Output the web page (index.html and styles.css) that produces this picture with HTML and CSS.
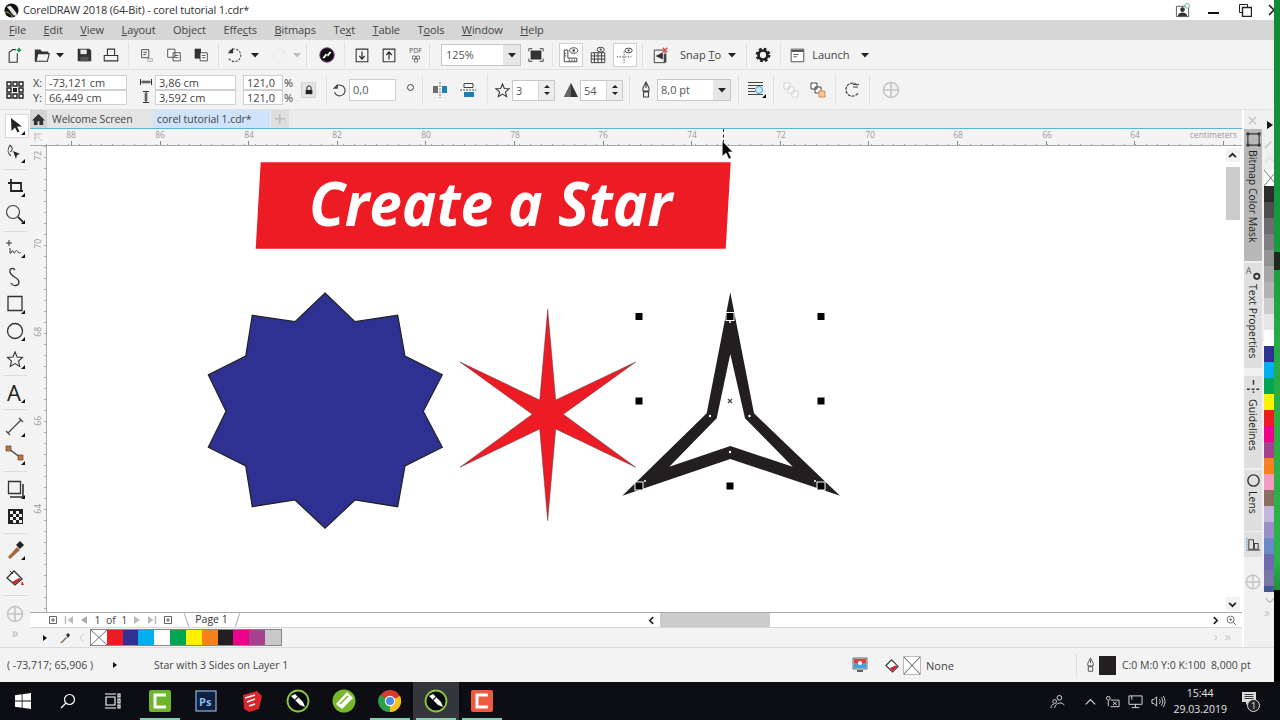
FILE: index.html
```html
<!DOCTYPE html>
<html>
<head>
    <meta charset="UTF-8">
    <title>CorelDRAW 2018 (64-Bit) - corel tutorial 1.cdr*</title>
    <link rel="stylesheet" href="styles.css">
</head>
<body>
    <!-- Shared icons -->
    <svg class="sprite" width="0" height="0">
        <symbol id="caret" viewBox="0 0 8 8"><path d="M0 2h8L4 6.500z" fill="#222"/></symbol>
        <symbol id="corner" viewBox="0 0 28 28"><path d="M24 24h-4l4-4z" fill="#111"/></symbol>
        <symbol id="penlogo" viewBox="0 0 24 24">
            <circle cx="12" cy="12" r="10.500" fill="#08090c" stroke="#8cc63f" stroke-width="1.800"/>
            <path d="M5 7l4-2 8 8 2 5-5-2z" fill="#fff"/><path d="M9 11l3-3" stroke="#222" stroke-width="1.200"/>
        </symbol>
        <symbol id="plusround" viewBox="0 0 20 20">
            <circle cx="10" cy="10" r="7.500" fill="none" stroke="#c4c4c4" stroke-width="1.600"/>
            <path d="M10 3v14M3 10h14" stroke="#c4c4c4" stroke-width="1.600"/>
        </symbol>
    </svg>

    <div class="desk">
        <div class="window">
            <!-- Title bar -->
            <div class="titlebar">
                <svg class="applogo" viewBox="0 0 16 16">
                    <circle cx="8" cy="8" r="7.500" fill="#111"/>
                    <path d="M3 4l4-1 6 7 1 4-4-1z" fill="#e8e8e8"/>
                    <path d="M1 10c3-1 6 1 8 5" stroke="#9bbf3a" fill="none"/>
                </svg>
                <span class="title">CorelDRAW 2018 (64-Bit) - corel tutorial 1.cdr*</span>
                <div class="winbtns">
                    <svg class="wb-user" viewBox="0 0 16 16">
                        <path d="M1.500 3.500h13v11h-13z" fill="#fff" stroke="#555"/>
                        <circle cx="8" cy="7" r="2.500" fill="#333"/><path d="M3 14c0-5 10-5 10 0z" fill="#333"/>
                        <circle cx="13" cy="3" r="2.500" fill="#fff" stroke="#5bb98c"/>
                    </svg>
                    <span class="wb-min"></span>
                    <svg class="wb-max" viewBox="0 0 13 13">
                        <path d="M0.500 0.500h8v8h-8z" fill="none" stroke="#222"/>
                        <path d="M3.500 3.500h9v9h-9z" fill="#fff" stroke="#222" stroke-width="1.400"/>
                    </svg>
                    <svg class="wb-close" viewBox="0 0 12 12"><path d="M1 1l10 10M11 1L1 11" stroke="#111" stroke-width="1.500"/></svg>
                </div>
            </div>

            <!-- Menu -->
            <div class="menubar">
                <span><u>F</u>ile</span>
                <span><u>E</u>dit</span>
                <span><u>V</u>iew</span>
                <span><u>L</u>ayout</span>
                <span>Ob<u>j</u>ect</span>
                <span>Effe<u>c</u>ts</span>
                <span><u>B</u>itmaps</span>
                <span>Te<u>x</u>t</span>
                <span><u>T</u>able</span>
                <span>T<u>o</u>ols</span>
                <span><u>W</u>indow</span>
                <span><u>H</u>elp</span>
            </div>

            <!-- Standard toolbar -->
            <div class="toolbar">
                <div class="tb"><svg viewBox="0 0 20 20"><path d="M3.500 18V7l4-3h5v14z" fill="none" stroke="#333" stroke-width="1.200"/><path d="M11 1h7v7h-7z" fill="#fff"/><path d="M14.500 2v5M12 4.500h5" stroke="#1a9e4b" stroke-width="2"/></svg></div>
                <div class="tb"><svg viewBox="0 0 20 20"><path d="M2 4h6l2 2h7v2H6l-2 9H2z" fill="#333"/><path d="M4.500 8.500H18l-2 8.500H3z" fill="none" stroke="#333" stroke-width="1.200"/></svg></div>
                <svg class="caret c-w8"><use href="#caret"/></svg>
                <div class="tb gap6"><svg viewBox="0 0 20 20"><path d="M3 3h13l2 2v12H3z" fill="#333"/><path d="M6 4h7v5H6z" fill="#e8e8e8"/><path d="M6 12h9v5H6z" fill="#555"/></svg></div>
                <div class="tb"><svg viewBox="0 0 20 20"><path d="M6 3.500h8v7H6zM2.500 10.500h15v6h-15z" fill="none" stroke="#333" stroke-width="1.200"/></svg></div>
                <i class="sep s-left"></i>
                <div class="tb"><svg viewBox="0 0 20 20"><path d="M4 4h8v9H4zM6 7h4M6 9.500h3" fill="none" stroke="#444"/><path d="M11 14h5v3h-5z" fill="none" stroke="#777" stroke-dasharray="1.500 1"/></svg></div>
                <div class="tb"><svg viewBox="0 0 20 20"><path d="M3 3.500h8v9H3zM9 7.500h8v9H9zM11 10.500h4M11 13h4" fill="#fff" stroke="#444"/></svg></div>
                <div class="tb"><svg viewBox="0 0 20 20"><path d="M3 3h7v11H3z" fill="#333"/><path d="M9 7.500h8v9H9zM11 10.500h4M11 13h4" fill="#fff" stroke="#444"/></svg></div>
                <i class="sep s-undo"></i>
                <div class="tb"><svg viewBox="0 0 20 20"><path d="M5 6a7 7 0 1 1-1 7" fill="none" stroke="#444" stroke-width="1.200" stroke-dasharray="2.500 1.500"/><path d="M9 2v6H3z" fill="#333"/></svg></div>
                <svg class="caret c-w12"><use href="#caret"/></svg>
                <div class="tb gap5 off"><svg viewBox="0 0 20 20"><path d="M15 6a7 7 0 1 0 1 7" fill="none" stroke="#d4d4d4" stroke-width="1.200" stroke-dasharray="2.500 1.500"/><path d="M12 2v6h6z" fill="#d4d4d4"/></svg></div>
                <svg class="caret c-w8 off"><use href="#caret"/></svg>
                <i class="sep s-left2"></i>
                <div class="tb"><svg viewBox="0 0 20 20"><circle cx="10" cy="10" r="8" fill="#111"/><circle cx="10" cy="10" r="8" fill="none" stroke="#7a2a8c" stroke-width="1"/><path d="M5 13l4-5 1 2-3 4zM15 7l-4 5-1-2 3-4z" fill="#fff"/></svg></div>
                <i class="sep s-exp"></i>
                <div class="tb"><svg viewBox="0 0 20 20"><path d="M3.500 3.500h13v14h-13z" fill="none" stroke="#333" stroke-width="1.200"/><path d="M10 6v8M7 11l3 3.500 3-3.500" fill="none" stroke="#222" stroke-width="1.300"/></svg></div>
                <div class="tb"><svg viewBox="0 0 20 20"><path d="M3.500 3.500h13v14h-13z" fill="none" stroke="#333" stroke-width="1.200"/><path d="M10 15V7M7 10l3-3.500 3 3.500" fill="none" stroke="#222" stroke-width="1.300"/></svg></div>
                <div class="tb pdf"><span>PDF</span><svg viewBox="0 0 10 8"><path d="M1.500 1h3v3h-3zM5.500 1h3v3h-3zM3.500 4h3v3h-3z" fill="none" stroke="#666" stroke-width=".8"/></svg></div>
                <i class="sep s-pdf"></i>
                <div class="combo zoomcombo"><span class="combo-v">125%</span><span class="combo-btn"><svg class="caret"><use href="#caret"/></svg></span></div>
                <div class="tb gap3"><svg viewBox="0 0 20 20"><path d="M4 5h12v10H4z" fill="#333"/><path d="M2 6V3h4M14 3h4v3M18 14v3h-4M6 17H2v-3" fill="none" stroke="#333"/></svg></div>
                <i class="sep s-view"></i>
                <div class="tb boxed"><svg viewBox="0 0 20 20"><path d="M2.500 4.500v13h14v-4h-10v-9z" fill="none" stroke="#333"/><path d="M2.500 8h2M2.500 11h2M8 17v-2M11 17v-2M14 17v-2" stroke="#333"/><ellipse cx="13" cy="5" rx="4.500" ry="3" fill="none" stroke="#333"/><circle cx="13" cy="5" r="1.300" fill="#333"/></svg></div>
                <div class="tb plain"><svg viewBox="0 0 20 20"><path d="M2.500 7.500h15v11h-15zM2.500 11h15M2.500 14.500h15M6 7.500v11M10 7.500v11M14 7.500v11" fill="none" stroke="#333"/><ellipse cx="13" cy="4" rx="4" ry="2.600" fill="none" stroke="#333"/><circle cx="13" cy="4" r="1.100" fill="#333"/></svg></div>
                <div class="tb boxed"><svg viewBox="0 0 20 20"><path d="M9 6v13M1 12h16" stroke="#444" stroke-dasharray="1.500 1.500"/><ellipse cx="14" cy="5" rx="4" ry="2.600" fill="none" stroke="#333"/><circle cx="14" cy="5" r="1.100" fill="#333"/></svg></div>
                <i class="sep s-snap"></i>
                <div class="tb"><svg viewBox="0 0 20 20"><path d="M2.500 4.500h12v14h-12z" fill="none" stroke="#333"/><path d="M12 7l-8 4 8 4z" fill="#333"/><path d="M12 2l5 5M17 2l-5 5" stroke="#e2453c" stroke-width="1.400"/><path d="M13 9h3v9h-3z" fill="#444"/></svg></div>
                <span class="label snap">Snap <u>T</u>o</span>
                <svg class="caret c-snap"><use href="#caret"/></svg>
                <i class="sep s-gear"></i>
                <div class="tb"><svg viewBox="0 0 20 20"><circle cx="10" cy="10" r="5" fill="none" stroke="#222" stroke-width="3"/><circle cx="10" cy="10" r="7" fill="none" stroke="#222" stroke-width="2.400" stroke-dasharray="3 2.500"/></svg></div>
                <i class="sep s-lau"></i>
                <div class="tb"><svg viewBox="0 0 20 20"><path d="M3.500 3.500h14v14h-14z" fill="#fff" stroke="#444"/><path d="M4 5.500h13" stroke="#444" stroke-width="2"/><path d="M6 9.500h6M6 12h4" stroke="#555"/></svg></div>
                <span class="label launch">Launch</span>
                <svg class="caret c-launch"><use href="#caret"/></svg>
            </div>

            <!-- Property bar -->
            <div class="propbar">
                <svg class="origin" viewBox="0 0 18 18">
                    <path d="M1 1h4v4H1zM7 1h4v4H7zM13 1h4v4h-4zM1 7h4v4H1zM13 7h4v4h-4zM1 13h4v4H1zM7 13h4v4H7zM13 13h4v4h-4z" fill="none" stroke="#222" stroke-width="1.400"/>
                    <path d="M7 7h4v4H7z" fill="#222"/>
                </svg>
                <div class="xy-labels"><span>X:</span><span>Y:</span></div>
                <div class="pair f-pos"><span>-73,121 cm</span><span>66,449 cm</span></div>
                <div class="size-icons">
                    <svg viewBox="0 0 12 8"><path d="M0.500 1v6M11.500 1v6M1 4h10M3 2.500v3M5 2.500v3M7 2.500v3M9 2.500v3" stroke="#333"/></svg>
                    <svg viewBox="0 0 8 12"><path d="M1 0.500h6M1 11.500h6M4 1v10M2.500 3h3M2.500 5h3M2.500 7h3M2.500 9h3" stroke="#333"/></svg>
                </div>
                <div class="pair f-size"><span>3,86 cm</span><span>3,592 cm</span></div>
                <div class="pair f-scale"><span>121,0</span><span>121,0</span></div>
                <div class="pcts"><span>%</span><span>%</span></div>
                <div class="lockbox"><svg viewBox="0 0 12 12"><path d="M3.500 6V3.500a2.500 2.500 0 0 1 5 0V6" fill="none" stroke="#222" stroke-width="1.200"/><path d="M2 6h8v5H2z" fill="#222"/></svg></div>
                <i class="sep s-rot"></i>
                <svg class="rot" viewBox="0 0 18 18"><path d="M4 5a6.500 6.500 0 1 1-1 6" fill="none" stroke="#444" stroke-width="1.300"/><path d="M7 1v6H1z" fill="#444"/></svg>
                <div class="field f-angle">0,0</div>
                <span class="degree"></span>
                <i class="sep s-mir"></i>
                <svg class="pi mir1" viewBox="0 0 18 18"><path d="M9 1v16" stroke="#777" stroke-dasharray="2 1"/><path d="M2 5h5v7H2z" fill="#6d6d6d"/><path d="M11 5h5v7h-5z" fill="#1d7fb8"/></svg>
                <svg class="pi mir2" viewBox="0 0 18 18"><path d="M1 9h16" stroke="#555" stroke-dasharray="2 1"/><path d="M5 2.500h9v4H5z" fill="none" stroke="#444"/><path d="M5 11h10v5H5z" fill="#1d7fb8"/></svg>
                <i class="sep s-star"></i>
                <svg class="pi star" viewBox="0 0 16 16"><path d="M8 1l2 4.800 5 .4-3.800 3.300 1.200 5L8 11.800l-4.400 2.700 1.200-5L1 6.200l5-.4z" fill="none" stroke="#333" stroke-width="1.100"/></svg>
                <div class="spin sp-a"><span class="spin-v">3</span><span class="spin-b"><b class="up"></b><b class="dn"></b></span></div>
                <svg class="pi tri" viewBox="0 0 16 16"><path d="M8 1l7 14H1z" fill="#333"/><path d="M8 1L1 15h7z" fill="#666"/></svg>
                <div class="spin sp-b"><span class="spin-v">54</span><span class="spin-b"><b class="up"></b><b class="dn"></b></span></div>
                <i class="sep s-pen"></i>
                <svg class="pi pen" viewBox="0 0 12 18"><path d="M6 1l3 6v3H3V7zM3.500 11h5v5h-5zM6 3v4" fill="none" stroke="#444" stroke-width="1.100"/></svg>
                <div class="combo pencombo"><span class="combo-v">8,0 pt</span><span class="combo-btn"><svg class="caret"><use href="#caret"/></svg></span></div>
                <i class="sep s-wrap"></i>
                <svg class="pi wrap" viewBox="0 0 20 20"><path d="M1 2.500h15M1 5.500h15M1 8.500h7M1 11.500h7M1 14.500h15" stroke="#444"/><circle cx="12" cy="10" r="3.500" fill="#cfe7f5" stroke="#3b9ad0"/><path d="M15 18h4v-4z" fill="#111"/></svg>
                <i class="sep s-ob"></i>
                <svg class="pi ob1" viewBox="0 0 18 18"><path d="M2 2h6v6H2zM6 6h6v6H6zM10 10h6v6h-6z" fill="#fff" stroke="#cfcfcf"/></svg>
                <svg class="pi ob2" viewBox="0 0 18 18"><path d="M2 2h6v6H2zM6 6h6v6H6z" fill="#fff" stroke="#444"/><path d="M10 10h6v6h-6z" fill="#f4c49a" stroke="#d98a4a"/></svg>
                <i class="sep s-conv"></i>
                <svg class="pi conv" viewBox="0 0 18 18"><path d="M14 4a6.500 6.500 0 1 0 1 8" fill="none" stroke="#444" stroke-width="1.300" stroke-dasharray="3 1"/><path d="M10 3.500h6M10 6h5" stroke="#444"/></svg>
                <i class="sep s-add"></i>
                <svg class="pi add"><use href="#plusround"/></svg>
            </div>

            <!-- Main area -->
            <div class="main">
                <div class="toolbox">
                    <div class="tool active"><svg viewBox="0 0 28 28"><path d="M10 7l.5 13 3.500-3.500 2.500 5 2-1-2.500-5h5z" fill="#222"/><use href="#corner"/></svg></div>
                    <div class="tool"><svg viewBox="0 0 28 28"><path d="M9 6c-3 5-3 8 1 11M9 6c3 3 3 6 0 7" fill="none" stroke="#444" stroke-width="1.100"/><path d="M12 12l7 3-3 1-1 4z" fill="#222"/><use href="#corner"/></svg></div>
                    <i class="tsep"></i>
                    <div class="tool"><svg viewBox="0 0 28 28"><path d="M7 10h13v8M10 6v12h12" fill="none" stroke="#222" stroke-width="1.800"/><use href="#corner"/></svg></div>
                    <div class="tool"><svg viewBox="0 0 28 28"><circle cx="12" cy="12" r="6.500" fill="none" stroke="#444" stroke-width="1.200"/><path d="M17 17l5 5" stroke="#333" stroke-width="1.800"/><use href="#corner"/></svg></div>
                    <i class="tsep"></i>
                    <div class="tool"><svg viewBox="0 0 28 28"><path d="M8 6v6M5 9h6" stroke="#333"/><path d="M9 14v5c1 2 2-4 3-2s1 3 2 1 2-2 3 0 2 1 3 0" fill="none" stroke="#333"/><use href="#corner"/></svg></div>
                    <div class="tool"><svg viewBox="0 0 28 28"><path d="M14 8c-3-4-7 0-4 4s8 4 8 8-6 5-8 1" fill="none" stroke="#333" stroke-width="1.300"/></svg></div>
                    <div class="tool"><svg viewBox="0 0 28 28"><path d="M7 6.500h14v14H7z" fill="none" stroke="#333" stroke-width="1.300"/><use href="#corner"/></svg></div>
                    <div class="tool"><svg viewBox="0 0 28 28"><circle cx="14" cy="14" r="7.500" fill="none" stroke="#333" stroke-width="1.300"/><use href="#corner"/></svg></div>
                    <div class="tool"><svg viewBox="0 0 28 28"><path d="M14 7l2.100 5 5.400.5-4 3.600 1.200 5.300L14 18.600l-4.700 2.800 1.200-5.300-4-3.600 5.400-.5z" fill="none" stroke="#333" stroke-width="1.100"/><use href="#corner"/></svg></div>
                    <i class="tsep"></i>
                    <div class="tool"><span class="tool-a">A</span><svg viewBox="0 0 28 28"><use href="#corner"/></svg></div>
                    <i class="tsep"></i>
                    <div class="tool"><svg viewBox="0 0 28 28"><path d="M7 20L20 7M5 18l4 4M18 5l4 4" stroke="#444" stroke-width="1.200"/><use href="#corner"/></svg></div>
                    <div class="tool"><svg viewBox="0 0 28 28"><path d="M8 8l12 9" stroke="#333" stroke-width="1.200"/><path d="M5 5h5v5H5z" fill="#c8753a" stroke="#333" stroke-width=".6"/><path d="M17 14h5v5h-5z" fill="#c8753a" stroke="#333" stroke-width=".6"/><use href="#corner"/></svg></div>
                    <i class="tsep"></i>
                    <div class="tool"><svg viewBox="0 0 28 28"><path d="M7.500 6.500h12v12h-12z" fill="none" stroke="#333" stroke-width="1.300"/><path d="M22 9v13H9" fill="none" stroke="#333" stroke-width="1.600"/><use href="#corner"/></svg></div>
                    <div class="tool"><svg viewBox="0 0 28 28"><path d="M7 7h15v15H7z" fill="#222"/><path d="M9 9h3v3H9zM15 9h3v3h-3zM12 12h3v3h-3zM18 12h3v3h-3zM9 15h3v3H9zM15 15h3v3h-3zM12 18h3v3h-3zM18 18h3v3h-3z" fill="#eee"/></svg></div>
                    <i class="tsep"></i>
                    <div class="tool"><svg viewBox="0 0 28 28"><path d="M7 21l9-10 3 3-10 9z" fill="#a9663a"/><path d="M15 9l4-4 4 4-4 4z" fill="#222"/><use href="#corner"/></svg></div>
                    <div class="tool"><svg viewBox="0 0 28 28"><path d="M6 14l7-7 8 8-7 6z" fill="#fff" stroke="#333" stroke-width="1.300"/><path d="M9 7l3 3" stroke="#333"/><path d="M11 18l7-4 2 1-7 6z" fill="#d72027"/><path d="M21 17l2 4h-3z" fill="#d72027"/></svg></div>
                    <i class="tsep"></i>
                    <svg class="tool-add"><use href="#plusround"/></svg>
                    <span class="more">»</span>
                </div>

                <div class="center">
                    <div class="tabs">
                        <div class="tab-home"><svg viewBox="0 0 14 14"><path d="M7 1L0 8h2v5h4V9h2v4h4V8h2z" fill="#333"/></svg></div>
                        <div class="tab t-welcome">Welcome Screen</div>
                        <div class="tab t-doc">corel tutorial 1.cdr*</div>
                        <div class="tab-plus"></div>
                    </div>
                    <div class="ruler-h">
                        <svg class="ruler-corner" viewBox="0 0 12 12"><path d="M2 2h8M2 2v8M2 2l8 8M6 2v2M2 6h2" stroke="#aaa" stroke-dasharray="1 .5"/></svg>
                        <div class="ticks-h"></div>
                        <span class="rh r88">88</span><span class="rh r86">86</span><span class="rh r84">84</span><span class="rh r82">82</span>
                        <span class="rh r80">80</span><span class="rh r78">78</span><span class="rh r76">76</span><span class="rh r74">74</span>
                        <span class="rh r72">72</span><span class="rh r70">70</span><span class="rh r68">68</span><span class="rh r66">66</span>
                        <span class="rh r64">64</span><span class="r-unit">centimeters</span>
                        <span class="r-mark"></span>
                    </div>
                    <div class="work">
                        <div class="ruler-v">
                            <span class="rv v72">72</span><span class="rv v70">70</span><span class="rv v68">68</span><span class="rv v66">66</span><span class="rv v64">64</span>
                        </div>
                        <svg class="canvas" viewBox="47 146 1178 466">
                            <path d="M260.700 162.300H730.700L725.700 248.700H255.700z" fill="#ed1c24"/>
                            <text class="banner" x="490.500" y="226" text-anchor="middle" textLength="363" lengthAdjust="spacingAndGlyphs">Create a Star</text>
                            <path d="M325 293L355 321.700 397.700 315.300 405 356 442.300 374.700 423.300 411.300 442.300 447.300 405 466 397.700 506.700 355 500 325 528.300 295 500 252.300 506.700 245.700 466 208.300 447.300 226 411.300 208.300 374.700 245.700 356 252.300 315.300 295 321.700z" fill="#2e3192" stroke="#222" stroke-width="1.200"/>
                            <path d="M547.700 309.300L555.700 400 635.700 362 563.300 414.300 635.700 467.300 555.700 429 547.700 520.700 539.700 429 460 467.300 532.300 414.300 460 362 539.700 400z" fill="#ed1c24" stroke="#444" stroke-width=".5"/>
                            <path fill-rule="evenodd" d="M730.300 292.300L754 413.300 840 495.700 730.300 459 622.300 495.700 706.700 413.300zM730.300 354L716.700 418.300 669.300 466.700 730.300 446 792.700 466.700 745 418.300z" fill="#231f20"/>
                            <!-- Selection handles -->
                            <g fill="#000">
                                <rect x="635.500" y="313" width="7" height="7"/><rect x="817.500" y="313" width="7" height="7"/>
                                <rect x="635.500" y="397.500" width="7" height="7"/><rect x="817.500" y="397.500" width="7" height="7"/>
                                <rect x="726.500" y="482.500" width="7" height="7"/>
                            </g>
                            <g fill="#000" stroke="#fff" stroke-width="1">
                                <rect x="726" y="312.500" width="8" height="8"/><rect x="635" y="482" width="8" height="8"/><rect x="817" y="482" width="8" height="8"/>
                            </g>
                            <g fill="#fff">
                                <circle cx="710" cy="416" r="1.200"/><circle cx="749.500" cy="416" r="1.200"/><circle cx="730" cy="452" r="1.200"/><circle cx="645" cy="481" r="1"/><circle cx="815" cy="481" r="1"/><circle cx="730" cy="322" r="1"/>
                            </g>
                            <path d="M728 399l4 4M732 399l-4 4" stroke="#444" stroke-width="1.200"/>
                        </svg>
                        <div class="vscroll">
                            <span class="sb-btn"><svg viewBox="0 0 8 8"><path d="M1 5.500l3-3 3 3" fill="none" stroke="#222" stroke-width="1.500"/></svg></span>
                            <span class="sb-thumb"></span>
                            <span class="sb-btn sb-end"><svg viewBox="0 0 8 8"><path d="M1 2.500l3 3 3-3" fill="none" stroke="#222" stroke-width="1.500"/></svg></span>
                        </div>
                    </div>
                    <div class="pagebar">
                        <svg class="pg" viewBox="0 0 10 10"><path d="M1.500 1.500h7v7h-7zM5 3v4M3 5h4" fill="none" stroke="#666"/></svg>
                        <svg class="pg" viewBox="0 0 10 10"><path d="M1.500 1v8" stroke="#bbb" stroke-width="1.500"/><path d="M9 1L3.500 5 9 9z" fill="#bbb"/></svg>
                        <svg class="pg" viewBox="0 0 10 10"><path d="M8 1L2 5l6 4z" fill="#aaa"/></svg>
                        <span class="pg-text">1&nbsp; of&nbsp; 1</span>
                        <svg class="pg" viewBox="0 0 10 10"><path d="M2 1l6 4-6 4z" fill="#bbb"/></svg>
                        <svg class="pg" viewBox="0 0 10 10"><path d="M8.500 1v8" stroke="#bbb" stroke-width="1.500"/><path d="M1 1l5.500 4L1 9z" fill="#bbb"/></svg>
                        <svg class="pg" viewBox="0 0 10 10"><path d="M1.500 1.500h7v7h-7zM5 3v4M3 5h4" fill="none" stroke="#666"/></svg>
                        <div class="pagetab">Page 1</div>
                        <div class="hscroll">
                            <span class="hs-left"><svg viewBox="0 0 8 8"><path d="M5.500 1l-3 3 3 3" fill="none" stroke="#222" stroke-width="1.500"/></svg></span>
                            <span class="hs-thumb"></span>
                            <span class="hs-right"><svg viewBox="0 0 8 8"><path d="M2.500 1l3 3-3 3" fill="none" stroke="#222" stroke-width="1.500"/></svg></span>
                            <svg class="hs-zoom" viewBox="0 0 12 12"><circle cx="5" cy="5" r="3.800" fill="none" stroke="#666"/><path d="M8 8l3 3M3.500 5h3M5 3.500v3" stroke="#666"/></svg>
                        </div>
                    </div>
                    <div class="docpal">
                        <span class="grip"></span>
                        <span class="tri-r"></span>
                        <svg class="pal-drop" viewBox="0 0 12 12"><path d="M1 11l6-6 1 1-5 5z" fill="#8a6a52"/><path d="M7 3l2-2 2 2-2 3z" fill="#333"/></svg>
                        <svg class="pal-less" viewBox="0 0 8 10"><path d="M6 1L2 5l4 4" fill="none" stroke="#ddd" stroke-width="1.500"/></svg>
                        <div class="swatches">
                            <span class="sw none"><svg viewBox="0 0 16 16" preserveAspectRatio="none"><path d="M0 0l16 16M16 0L0 16" stroke="#444" stroke-width=".8"/></svg></span>
                            <span class="sw red"></span><span class="sw navy"></span><span class="sw cyan"></span><span class="sw white"></span><span class="sw green"></span><span class="sw yellow"></span><span class="sw orange"></span><span class="sw black"></span><span class="sw magenta"></span><span class="sw purple"></span><span class="sw gray"></span>
                        </div>
                        <span class="pal-more">›&nbsp;&nbsp;»</span>
                    </div>
                </div>

                <!-- Dockers -->
                <div class="docker">
                    <svg class="dk-close" viewBox="0 0 10 10"><path d="M1 1l8 8M9 1L1 9" stroke="#bbb" stroke-width="1.300"/></svg>
                    <div class="dk dk-mask">
                        <svg viewBox="0 0 16 16"><path d="M2 2h12v12H2z" fill="none" stroke="#333" stroke-width="1.200"/><path d="M0.500 0.500h3v3h-3zM12.500 0.500h3v3h-3zM0.500 12.500h3v3h-3zM12.500 12.500h3v3h-3z" fill="#333"/></svg>
                        <span>Bitmap Color Mask</span>
                    </div>
                    <div class="dk dk-text">
                        <svg viewBox="0 0 16 16"><text class="dk-a" x="0" y="9">A</text><circle cx="11.500" cy="11" r="2.800" fill="none" stroke="#333" stroke-width="2"/></svg>
                        <span>Text Properties</span>
                    </div>
                    <div class="dk dk-guide">
                        <svg viewBox="0 0 16 16"><path d="M8 1v5M1 11h3M6 11h3M11 11h3M8 13v2" stroke="#333" stroke-width="1.500"/></svg>
                        <span>Guidelines</span>
                    </div>
                    <div class="dk dk-lens">
                        <svg viewBox="0 0 16 16"><circle cx="8" cy="8" r="6" fill="none" stroke="#333" stroke-width="1.500"/></svg>
                        <span>Lens</span>
                    </div>
                    <div class="dk dk-align">
                        <svg viewBox="0 0 16 16"><path d="M1 1v14" stroke="#4aa3d8" stroke-dasharray="2 1"/><path d="M3 3h5v10H3zM9 7h4v6H9z" fill="none" stroke="#444" stroke-width="1.100"/><path d="M2 14h13" stroke="#444"/></svg>
                    </div>
                    <svg class="dk-add"><use href="#plusround"/></svg>
                </div>

                <div class="palette">
                    <span class="pl-grip"></span>
                    <span class="pl-tri"></span>
                    <svg class="pl-icon" viewBox="0 0 12 12"><path d="M1 11l8-8" stroke="#ccc" stroke-width="2"/></svg>
                    <svg class="pl-icon pl-up" viewBox="0 0 12 12"><path d="M2 9l5-5 5 5" fill="none" stroke="#ddd" stroke-width="1.500"/></svg>
                    <span class="pl p0"><svg viewBox="0 0 12 16" preserveAspectRatio="none"><path d="M0 0l16 16M0 16L16 0" stroke="#444" stroke-width=".8"/></svg></span>
                    <span class="pl p1"></span><span class="pl p2"></span><span class="pl p3"></span><span class="pl p4"></span><span class="pl p5"></span><span class="pl p6"></span><span class="pl p7"></span><span class="pl p8"></span><span class="pl p9"></span>
                    <span class="pl p10"></span><span class="pl p11"></span><span class="pl p12"></span><span class="pl p13"></span><span class="pl p14"></span><span class="pl p15"></span><span class="pl p16"></span><span class="pl p17"></span><span class="pl p18"></span><span class="pl p19"></span>
                    <span class="pl p20"></span><span class="pl p21"></span><span class="pl p22"></span><span class="pl p23"></span><span class="pl p24"></span><span class="pl p25"></span><span class="pl p26"></span>
                    <svg class="pl-icon pl-dn" viewBox="0 0 12 12"><path d="M2 4l5 5 5-5" fill="none" stroke="#bbb" stroke-width="1.500"/></svg>
                    <span class="pl-more">»</span>
                </div>
            </div>

            <!-- Status bar -->
            <div class="status">
                <span class="st-pos">( -73,717; 65,906 )</span>
                <span class="tri-r st-tri"></span>
                <span class="st-obj">Star with 3 Sides on Layer 1</span>
                <svg class="st-mon" viewBox="0 0 16 16"><path d="M1 1h14v11H1z" fill="#e7e7e7" stroke="#666"/><path d="M2 2h12v4H2z" fill="#d8413c"/><path d="M2 6h12v5H2z" fill="#3aa6dc"/><circle cx="8" cy="6" r="2" fill="#fff"/><path d="M5 14h6" stroke="#333" stroke-width="1.500"/></svg>
                <svg class="st-fill" viewBox="0 0 16 16"><path d="M1 8l6-6 7 7-6 6z" fill="#fff" stroke="#333" stroke-width="1.200"/><path d="M5 11l6-3 2 1-5 5z" fill="#d72027"/></svg>
                <span class="st-none"><svg viewBox="0 0 18 19" preserveAspectRatio="none"><path d="M0 0l18 19M18 0L0 19" stroke="#444"/></svg></span>
                <span class="st-nonetext">None</span>
                <i class="st-sep"></i>
                <svg class="st-pen" viewBox="0 0 12 18"><path d="M6 1l3 6v3H3V7zM3.500 11h5v5h-5zM6 3v4" fill="none" stroke="#555" stroke-width="1.100"/></svg>
                <span class="st-black"></span>
                <span class="st-cmyk">C:0 M:0 Y:0 K:100&nbsp; 8,000 pt</span>
            </div>
        </div>
        <div class="wallpaper"><span class="wp-spot"></span></div>
    </div>

    <!-- Windows taskbar -->
    <div class="taskbar">
        <div class="task sys"><svg viewBox="0 0 16 16"><path d="M0 2.300L6.700 1.300V7.600H0zM7.500 1.200L16 0V7.600H7.500zM0 8.400H6.700V14.700L0 13.700zM7.500 8.400H16V16L7.500 14.800z" fill="#fff"/></svg></div>
        <div class="task sys"><svg viewBox="0 0 16 16"><circle cx="9.500" cy="6.500" r="5" fill="none" stroke="#fff" stroke-width="1.200"/><path d="M6 10l-5 5" stroke="#fff" stroke-width="1.300"/></svg></div>
        <div class="task sys"><svg viewBox="0 0 16 16"><path d="M1 4h9v8H1zM0 1h11M0 15h11M13 1h2v3h-2zM13 6h2v4h-2zM13 12h2v3h-2z" fill="none" stroke="#fff" stroke-width="1.100"/></svg></div>
        <div class="task lit first-app"><svg class="big" viewBox="0 0 24 24"><rect x="1" y="1" width="22" height="22" rx="2" fill="#6cb52d"/><path d="M18 6H7v12h11" fill="none" stroke="#fff" stroke-width="3"/></svg></div>
        <div class="task"><svg class="big" viewBox="0 0 24 24"><rect x="2" y="2" width="20" height="20" fill="#10213f" stroke="#8fb1dd" stroke-width="1.200"/><text class="ps" x="5" y="16.500">Ps</text></svg></div>
        <div class="task"><svg class="big" viewBox="0 0 24 24"><path d="M3 6l14-4 5 5-3 13-10 3-5-3z" fill="#d8262c"/><path d="M5 9l10-3M7 13l8-3M9 17l6-2" stroke="#fff" stroke-width="1.600"/></svg></div>
        <div class="task"><svg class="big"><use href="#penlogo"/></svg></div>
        <div class="task"><svg class="big" viewBox="0 0 24 24"><circle cx="12" cy="12" r="11.500" fill="#78b82a"/><path d="M4 15L15 3l6 6-11 11z" fill="#fff"/><path d="M8 15l8-8" stroke="#78b82a" stroke-width="1.600"/></svg></div>
        <div class="task lit"><svg class="big" viewBox="0 0 24 24"><circle cx="12" cy="12" r="11" fill="#d63b2f"/><path d="M12 12L22 7A11 11 0 0 1 12 23z" fill="#f2c31e"/><path d="M12 12L12 23A11 11 0 0 1 2 6z" fill="#2f9e4a"/><circle cx="12" cy="12" r="5.200" fill="#fff"/><circle cx="12" cy="12" r="4" fill="#4a8be8"/></svg></div>
        <div class="task lit current"><svg class="big"><use href="#penlogo"/></svg></div>
        <div class="task lit"><svg class="big" viewBox="0 0 24 24"><rect x="1" y="1" width="22" height="22" rx="2" fill="#ee5a3d"/><path d="M18 6H7v12h11" fill="none" stroke="#fff" stroke-width="3"/></svg></div>
        <div class="tray">
            <svg class="tr people" viewBox="0 0 16 16"><circle cx="10" cy="4" r="2.500" fill="none" stroke="#ddd"/><path d="M5 15c0-6 9-7 10-3" fill="none" stroke="#ddd"/><circle cx="5" cy="8" r="2" fill="none" stroke="#ddd"/><path d="M1 15c0-2 1-4 3-4" fill="none" stroke="#ddd"/></svg>
            <svg class="tr chev" viewBox="0 0 16 16"><path d="M3 11l5-5 5 5" fill="none" stroke="#ddd" stroke-width="1.200"/></svg>
            <svg class="tr net" viewBox="0 0 16 16"><circle cx="3.500" cy="4.500" r="2" fill="none" stroke="#ddd"/><path d="M3.500 7v6M6 6.500h9v7H6M8.500 8.500l4 3M12.500 8.500l-4 3" fill="none" stroke="#ddd"/></svg>
            <svg class="tr mon" viewBox="0 0 16 16"><path d="M1 2h14v9H1zM8 11v3M4 14.500h8M4 2v4" fill="none" stroke="#ddd"/></svg>
            <svg class="tr vol" viewBox="0 0 16 16"><path d="M1 6h2l3-3v10l-3-3H1zM9 5.500c1 1.500 1 3.500 0 5M11 3.500c2 2.500 2 6.500 0 9M13 2c2.500 3.500 2.500 8.500 0 12" fill="none" stroke="#ddd"/></svg>
            <div class="clock"><span>15:44</span><span>29.03.2019</span></div>
            <div class="notif">
                <svg viewBox="0 0 16 16"><path d="M1 1h14v10H8l-3 3v-3H1z" fill="#ddd"/><path d="M3.500 3.500h9M3.500 5.500h9M3.500 7.500h9" stroke="#111" stroke-width=".8"/></svg>
                <span class="badge">1</span>
            </div>
        </div>
    </div>

    <!-- Mouse pointer, sits over the ruler and the canvas -->
    <svg class="cursor" viewBox="0 0 12 20"><path d="M1 0v16l4-3.500 3 6.500 2.500-1-3-6.500H12z" fill="#000" stroke="#fff" stroke-width=".6"/></svg>
</body>
</html>
```

FILE: styles.css
```css
* {
    box-sizing: border-box;
}
html, body {
    margin: 0;
    padding: 0;
    width: 1280px;
    height: 720px;
    overflow: hidden;
}
body {
    font-family: "Open Sans", "Noto Sans", sans-serif;
    font-size: 11px;
    color: #333;
    background-color: #000;
    position: relative;
}
svg {
    display: block;
    flex: none;
}
i, b {
    display: block;
    flex: none;
}
.sprite {
    position: absolute;
}
.desk {
    display: flex;
    height: 682px;
}
.window {
    width: 1274px;
    display: flex;
    flex-direction: column;
    background-color: #f3f3f3;
}
.wallpaper {
    width: 6px;
    position: relative;
    background: linear-gradient(to bottom, #0f8a35 0, #1b9a3d 250px, #27ab44 340px, #2db34a 560px, #1c8f3b 590px, #000 590px);
}
.wp-spot {
    position: absolute;
    top: 252px;
    left: 0;
    width: 6px;
    height: 18px;
    background-color: #1c2a1c;
}

/* title bar */
.titlebar {
    height: 20px;
    background-color: #fff;
    display: flex;
    align-items: center;
    padding-left: 4px;
}
.applogo {
    width: 15px;
    height: 15px;
}
.title {
    margin: -2px 0 0 4px;
    font-size: 11px;
    letter-spacing: -0.2px;
    color: #333;
}
.winbtns {
    margin-left: auto;
    display: flex;
    align-items: center;
}
.wb-user {
    width: 15px;
    height: 15px;
    margin-right: 18px;
}
.wb-min {
    width: 11px;
    height: 2px;
    background-color: #111;
    margin: 6px 20px 0 0;
}
.wb-max {
    width: 13px;
    height: 13px;
    margin-right: 16px;
}
.wb-close {
    width: 12px;
    height: 12px;
    margin-right: -6px;
}

/* menu */
.menubar {
    height: 20px;
    background-color: #d6d6d6;
    display: flex;
    align-items: center;
    padding: 0 0 2px 9px;
    gap: 17.550px;
    font-size: 11px;
    letter-spacing: -0.1px;
    color: #444;
}

/* toolbars */
.toolbar {
    height: 30px;
    display: flex;
    align-items: center;
    border-bottom: 1px solid #e2e2e2;
}
.tb {
    width: 27px;
    height: 24px;
    display: flex;
    align-items: center;
    justify-content: center;
    flex: none;
}
.tb svg {
    width: 18px;
    height: 18px;
}
.off {
    opacity: 0.25;
}
.sep {
    width: 1px;
    height: 24px;
    background-color: #e3e3e3;
    margin: 0 4px;
}
.caret {
    width: 8px;
    height: 8px;
}
.c-w8 {
    margin-left: 1px;
}
.c-w12 {
    margin-left: 4px;
}
.toolbar > .tb:first-child {
    margin-left: 1px;
}
.gap6 {
    margin-left: 6px;
}
.gap5 {
    margin-left: 6px;
}
.gap3 {
    margin-left: 1px;
}
.s-left {
    margin: 0 4px 0 4px;
}
.s-undo {
    margin: 0 1px 0 4px;
}
.s-left2 {
    margin: 0 6px 0 5px;
}
.s-exp {
    margin: 0 3px 0 4px;
}
.s-pdf {
    margin: 0 11px 0 0;
}
.s-view {
    margin: 0 4px 0 3px;
}
.s-snap {
    margin: 0 4px 0 4px;
}
.s-gear {
    margin: 0 2px 0 10px;
}
.s-lau {
    margin: 0 2px 0 4px;
}
.pdf {
    flex-direction: column;
    font-size: 7px;
    line-height: 8px;
    color: #555;
}
.pdf svg {
    width: 10px;
    height: 8px;
}
.boxed {
    width: 24px;
    margin: 0 1.500px;
    background-color: #fff;
    border: 1px solid #d0d0d0;
}
.plain {
    margin: 0;
}
.label {
    font-size: 11px;
    color: #444;
}
.snap {
    margin-left: 6px;
    white-space: nowrap;
}
.c-snap {
    margin-left: 7px;
}
.launch {
    margin-left: 2px;
}
.c-launch {
    margin-left: 11px;
}
.combo {
    display: flex;
    align-items: stretch;
    background-color: #fff;
    border: 1px solid #c8c8c8;
    flex: none;
}
.combo-v {
    flex: 1;
    padding-left: 4px;
    font-size: 11px;
    color: #555;
    line-height: 20px;
}
.combo-btn {
    width: 17px;
    background-color: #e6e6e6;
    display: flex;
    align-items: center;
    justify-content: center;
}
.zoomcombo {
    width: 80px;
    height: 22px;
}
.pencombo {
    width: 74px;
    height: 22px;
    margin-left: 5px;
}
.pencombo .combo-v {
    padding-left: 3px;
}

/* property bar */
.propbar {
    height: 40px;
    display: flex;
    align-items: center;
    border-bottom: 1px solid #e2e2e2;
    padding: 1px 0 0 6px;
}
.origin {
    width: 18px;
    height: 18px;
}
.xy-labels, .pcts {
    display: flex;
    flex-direction: column;
    line-height: 15px;
    color: #444;
    font-size: 11px;
}
.xy-labels {
    margin-left: 9px;
    width: 12px;
}
.pair {
    display: flex;
    flex-direction: column;
    flex: none;
}
.pair span {
    height: 15px;
    line-height: 13px;
    background-color: #fff;
    border: 1px solid #cfcfcf;
    padding-left: 3px;
    font-size: 11px;
    color: #444;
}
.f-pos {
    width: 82px;
}
.size-icons {
    width: 28px;
    display: flex;
    flex-direction: column;
    align-items: flex-end;
    gap: 5px;
    padding-right: 3px;
    flex: none;
}
.size-icons svg:first-child {
    width: 12px;
    height: 8px;
}
.size-icons svg:last-child {
    width: 8px;
    height: 12px;
    margin-right: 2px;
}
.f-size {
    width: 81px;
}
.f-scale {
    width: 40px;
    margin-left: 7px;
}
.pcts {
    width: 11px;
    text-align: center;
}
.lockbox {
    width: 15px;
    height: 16px;
    margin-left: 7px;
    background-color: #e4e4e4;
    border: 1px solid #d4d4d4;
    display: flex;
    align-items: center;
    justify-content: center;
    flex: none;
}
.lockbox svg {
    width: 10px;
    height: 10px;
}
.propbar .sep {
    height: 30px;
}
.propbar .s-rot {
    margin: 0 5px 0 10px;
}
.rot {
    width: 15px;
    height: 15px;
}
.field {
    background-color: #fff;
    border: 1px solid #cfcfcf;
    flex: none;
}
.f-angle {
    width: 47px;
    height: 22px;
    line-height: 20px;
    padding-left: 3px;
    margin-left: 2px;
    color: #555;
}
.degree {
    width: 7px;
    height: 7px;
    border: 1px solid #444;
    border-radius: 50%;
    margin: -5px 0 0 11px;
    flex: none;
}
.propbar .s-mir {
    margin: 0 8px 0 8px;
}
.pi {
    width: 18px;
    height: 18px;
}
.mir2 {
    margin-left: 10px;
}
.propbar .s-star {
    margin: 0 7px 0 10px;
}
.star {
    width: 15px;
    height: 15px;
}
.spin {
    display: flex;
    width: 43px;
    height: 21px;
    background-color: #fff;
    border: 1px solid #c8c8c8;
    margin-left: 2px;
    flex: none;
}
.spin-v {
    flex: 1;
    padding-left: 3px;
    line-height: 19px;
    color: #555;
}
.spin-b {
    width: 16px;
    background-color: #ededed;
    border-left: 1px solid #d5d5d5;
    display: flex;
    flex-direction: column;
    align-items: center;
    justify-content: space-around;
    padding: 3px 0;
}
.up, .dn {
    width: 0;
    height: 0;
    border-left: 3px solid transparent;
    border-right: 3px solid transparent;
}
.up {
    border-bottom: 3px solid #222;
}
.dn {
    border-top: 3px solid #222;
}
.tri {
    width: 16px;
    height: 16px;
    margin-left: 8px;
}
.sp-b {
    margin-left: 1px;
}
.propbar .s-pen {
    margin: 0 10px 0 6px;
}
.pen {
    width: 12px;
}
.propbar .s-wrap {
    margin: 0 8px 0 7px;
}
.wrap {
    width: 20px;
    height: 20px;
}
.propbar .s-ob {
    margin: 0 8px 0 6px;
}
.ob1 {
    opacity: 0.9;
}
.ob2 {
    margin-left: 9px;
}
.propbar .s-conv {
    margin: 0 7px 0 8px;
}
.propbar .s-add {
    margin: 0 11px 0 8px;
}
.add {
    width: 20px;
    height: 20px;
}

/* main area */
.main {
    height: 537px;
    display: flex;
}
.toolbox {
    width: 30px;
    padding-top: 1px;
    display: flex;
    flex-direction: column;
    align-items: center;
    background-color: #f3f3f3;
    flex: none;
}
.tool {
    width: 28px;
    height: 27.600px;
    position: relative;
    flex: none;
}
.tool svg {
    width: 28px;
    height: 28px;
}
.tool.active::before {
    content: "";
    position: absolute;
    left: 4px;
    top: 3px;
    width: 22px;
    height: 22px;
    background-color: #fff;
    border: 1px solid #d8d8d8;
}
.tool.active svg {
    position: relative;
}
.tool-a {
    position: absolute;
    top: 0;
    left: 6px;
    font-size: 22px;
    line-height: 27px;
    color: #222;
}
.tool-a + svg {
    position: relative;
}
.tsep {
    width: 24px;
    height: 1px;
    margin: 3px 0 2.500px;
    background-color: #dcdcdc;
    flex: none;
}
.tool-add {
    width: 20px;
    height: 20px;
    margin-top: 6px;
}
.more {
    margin-top: 1px;
    font-size: 14px;
    line-height: 16px;
    color: #bbb;
}

.center {
    width: 1213px;
    display: flex;
    flex-direction: column;
    flex: none;
    border-right: 1px solid #fff;
}

/* tabs */
.tabs {
    height: 18px;
    display: flex;
    background-color: #ececec;
    flex: none;
}
.tab-home {
    width: 17px;
    background-color: #d4d4d4;
    display: flex;
    align-items: center;
    justify-content: center;
}
.tab-home svg {
    width: 13px;
    height: 13px;
}
.tab {
    line-height: 18px;
    font-size: 10.500px;
    letter-spacing: -0.05px;
    color: #444;
}
.t-welcome {
    width: 106px;
    padding-left: 5px;
    background-color: #e4e4e4;
}
.t-doc {
    width: 117px;
    padding-left: 4px;
    background-color: #cfe3fb;
}
.tab-plus {
    width: 18px;
    margin-left: 1px;
    background:
        linear-gradient(#bdbdbd, #bdbdbd) center / 10px 1.500px no-repeat,
        linear-gradient(#bdbdbd, #bdbdbd) center / 1.500px 10px no-repeat,
        #dedede;
}

/* rulers */
.ruler-h {
    height: 18px;
    position: relative;
    background-color: #f4f4f4;
    border-top: 1px solid #5ab4e2;
    border-bottom: 1px solid #a9a9a9;
    flex: none;
}
.ruler-corner {
    position: absolute;
    left: 3px;
    top: 3px;
    width: 11px;
    height: 11px;
}
.ticks-h {
    position: absolute;
    left: 16px;
    right: 3px;
    bottom: 0;
    height: 4px;
    background-image:
        repeating-linear-gradient(to right, transparent 0, transparent 24.900px, #888 24.900px, #888 25.900px, transparent 25.900px, transparent 88.600px),
        repeating-linear-gradient(to right, #aaa 0, #aaa 1px, transparent 1px, transparent 11px);
    background-size: 100% 4px, 100% 1.500px;
    background-position: 0 0, 0 100%;
    background-repeat: no-repeat;
}
.rh {
    position: absolute;
    top: 0;
    font-size: 8.500px;
    line-height: 12px;
    color: #999;
    width: 20px;
    margin-left: -10px;
    text-align: center;
}
.r88 { left: 41px; }
.r86 { left: 130px; }
.r84 { left: 219px; }
.r82 { left: 307px; }
.r80 { left: 396px; }
.r78 { left: 485px; }
.r76 { left: 573px; }
.r74 { left: 662px; }
.r72 { left: 751px; }
.r70 { left: 840px; }
.r68 { left: 928px; }
.r66 { left: 1017px; }
.r64 { left: 1105px; }
.r-unit {
    position: absolute;
    right: 5px;
    top: 0;
    font-size: 8.500px;
    line-height: 12px;
    color: #999;
}
.r-mark {
    position: absolute;
    left: 693px;
    top: 0;
    height: 14px;
    border-left: 1px dashed #222;
}
.work {
    height: 466px;
    display: flex;
    flex: none;
}
.ruler-v {
    width: 17px;
    position: relative;
    background-color: #f4f4f4;
    border-right: 1px solid #a9a9a9;
    background-image: repeating-linear-gradient(to bottom, #aaa 0, #aaa 1px, transparent 1px, transparent 11px);
    background-size: 2px 100%;
    background-position: 14px 0;
    background-repeat: no-repeat;
    flex: none;
}
.rv {
    position: absolute;
    left: 2px;
    writing-mode: vertical-rl;
    transform: rotate(180deg);
    font-size: 8.500px;
    line-height: 12px;
    color: #999;
}
.v72 { top: 5px; }
.v70 { top: 93px; }
.v68 { top: 181px; }
.v66 { top: 270px; }
.v64 { top: 358px; }
.canvas {
    width: 1178px;
    height: 466px;
    background-color: #fff;
}
.banner {
    font-family: "Open Sans", "Noto Sans", sans-serif;
    font-size: 61px;
    font-weight: 700;
    font-style: italic;
    fill: #fff;
}
.vscroll {
    width: 17px;
    background-color: #fff;
    display: flex;
    flex-direction: column;
    align-items: center;
    padding-right: 2px;
}
.sb-btn {
    width: 14px;
    height: 14px;
    margin-top: 2px;
    background-color: #f3f3f3;
    display: flex;
    align-items: center;
    justify-content: center;
}
.sb-btn svg, .hs-left svg, .hs-right svg {
    width: 9px;
    height: 9px;
}
.sb-thumb {
    width: 14px;
    height: 53px;
    margin-top: 5px;
    background-color: #ccc;
}
.sb-end {
    margin-top: auto;
    margin-bottom: 1px;
}

/* page bar */
.pagebar {
    height: 16px;
    display: flex;
    align-items: center;
    padding-left: 18px;
    background-color: #fff;
    border-top: 1px solid #aaa;
    border-bottom: 1px solid #d8d8d8;
    flex: none;
    position: relative;
}
.pg {
    width: 10px;
    height: 10px;
    margin-right: 5.500px;
}
.pg-text {
    width: 37px;
    font-size: 10.500px;
    color: #444;
    white-space: nowrap;
}
.pagetab {
    width: 50px;
    height: 14px;
    margin: 0 0 0 8.500px;
    text-align: center;
    line-height: 13px;
    font-size: 10.500px;
    color: #333;
    background-color: #fff;
    flex: none;
    position: relative;
}
.pagetab::before, .pagetab::after {
    content: "";
    position: absolute;
    top: 0;
    width: 1px;
    height: 14px;
    background-color: #aaa;
}
.pagetab::before {
    left: -1px;
    transform: rotate(-18deg);
}
.pagetab::after {
    right: -1px;
    transform: rotate(18deg);
}
.hscroll {
    position: absolute;
    left: 592px;
    right: 0;
    top: 0;
    height: 14px;
    display: flex;
    align-items: center;
}
.hs-left, .hs-right {
    width: 14px;
    height: 14px;
    display: flex;
    align-items: center;
    justify-content: center;
    flex: none;
}
.hs-left {
    margin-left: 22px;
}
.hs-thumb {
    width: 110px;
    height: 14px;
    margin-left: 2px;
    background-color: #ccc;
}
.hs-right {
    margin-left: 438px;
}
.hs-zoom {
    width: 11px;
    height: 11px;
    margin-left: 4px;
}

/* document palette */
.docpal {
    height: 19px;
    display: flex;
    align-items: center;
    background-color: #f3f3f3;
    flex: none;
    position: relative;
}
.grip {
    width: 6px;
    height: 15px;
    margin-left: 2px;
    background-image: radial-gradient(#c4c4c4 40%, transparent 45%);
    background-size: 2px 2px;
}
.tri-r {
    width: 0;
    height: 0;
    border-left: 4px solid #111;
    border-top: 3px solid transparent;
    border-bottom: 3px solid transparent;
    flex: none;
}
.docpal .tri-r {
    margin-left: 5px;
}
.pal-drop {
    width: 12px;
    height: 12px;
    margin-left: 12px;
}
.pal-less {
    width: 8px;
    height: 10px;
    margin-left: 7px;
}
.swatches {
    display: flex;
    height: 17px;
    margin-left: 4px;
    border: 1px solid #888;
    flex: none;
}
.sw {
    width: 15.830px;
    height: 15px;
    display: block;
}
.none {
    background-color: #fff;
}
.none svg {
    width: 16px;
    height: 15px;
}
.red { background-color: #ed1c24; }
.navy { background-color: #2e3192; }
.cyan { background-color: #00aeef; }
.white { background-color: #fff; }
.green { background-color: #00a651; }
.yellow { background-color: #fff200; }
.orange { background-color: #f7811c; }
.black { background-color: #231f20; }
.magenta { background-color: #ec008c; }
.purple { background-color: #a5418f; }
.gray { background-color: #c8c8c8; }
.pal-more {
    position: absolute;
    right: 11px;
    top: 0;
    font-size: 13px;
    line-height: 17px;
    color: #c8c8c8;
}

/* docker tabs */
.docker {
    width: 19px;
    display: flex;
    flex-direction: column;
    align-items: stretch;
    background-color: #f0f0f0;
    border-left: 1px solid #fff;
    flex: none;
    position: relative;
}
.dk-close {
    width: 9px;
    height: 9px;
    margin: 6px 0 4px 4px;
}
.dk {
    display: flex;
    flex-direction: column;
    align-items: center;
    font-size: 10.500px;
    color: #222;
    flex: none;
}
.dk svg {
    width: 15px;
    height: 15px;
    margin: 3px 0;
}
.dk span {
    writing-mode: vertical-rl;
    line-height: 16px;
    white-space: nowrap;
}
.dk-mask {
    height: 132px;
    background-color: #b8b8b8;
    margin-bottom: 2px;
}
.dk-text {
    height: 105px;
    background-color: #dfdfdf;
    margin-bottom: 8px;
}
.dk-a {
    font-size: 9px;
    fill: #555;
}
.dk-guide {
    height: 92px;
    background-color: #dfdfdf;
    margin-bottom: 2px;
}
.dk-guide svg {
    margin-bottom: 5px;
}
.dk-lens {
    height: 61px;
    background-color: #dfdfdf;
    margin-bottom: 1px;
}
.dk-align {
    height: 25px;
    background-color: #e0e0e0;
    justify-content: center;
}
.dk-add {
    width: 18px;
    height: 18px;
    margin-top: 16px;
}

/* color palette */
.palette {
    width: 12px;
    display: flex;
    flex-direction: column;
    background-color: #f0f0f0;
    padding: 2px 0 0 2px;
    flex: none;
}
.pl-grip {
    height: 6px;
    background-image: radial-gradient(#ccc 40%, transparent 45%);
    background-size: 2px 2px;
    flex: none;
}
.pl-tri {
    width: 0;
    height: 0;
    margin: 3px 0 3px 3px;
    border-left: 6px solid #111;
    border-top: 4px solid transparent;
    border-bottom: 4px solid transparent;
    flex: none;
}
.pl-icon {
    width: 10px;
    height: 12px;
    margin-top: 6px;
}
.pl-up {
    margin-top: 3px;
    margin-bottom: 5px;
}
.pl {
    display: block;
    height: 16px;
    flex: none;
}
.pl svg {
    width: 10px;
    height: 16px;
}
.p0 { background-color: #fff; }
.p1 { background-color: #2b2b2b; }
.p2 { background-color: #4d4d4d; }
.p3 { background-color: #6d6d6d; }
.p4 { background-color: #808080; }
.p5 { background-color: #939393; }
.p6 { background-color: #a6a6a6; }
.p7 { background-color: #b3b3b3; }
.p8 { background-color: #cccccc; }
.p9 { background-color: #e6e6e6; }
.p10 { background-color: #fff; }
.p11 { background-color: #2e3192; }
.p12 { background-color: #00aeef; }
.p13 { background-color: #00a651; }
.p14 { background-color: #fff200; }
.p15 { background-color: #ed1c24; }
.p16 { background-color: #ec008c; }
.p17 { background-color: #a5418f; }
.p18 { background-color: #f7811c; }
.p19 { background-color: #f49ac1; }
.p20 { background-color: #8c6d62; }
.p21 { background-color: #c3b5dd; }
.p22 { background-color: #9b8fc9; }
.p23 { background-color: #6a87c7; }
.p24 { background-color: #6f69ae; }
.p25 { background-color: #7a75a8; }
.p26 { background-color: #44598f; height: 6px; }
.pl-dn {
    margin-top: 2px;
}
.pl-more {
    font-size: 12px;
    line-height: 14px;
    color: #c8c8c8;
}

/* status bar */
.status {
    height: 35px;
    display: flex;
    align-items: center;
    background-color: #f3f3f3;
    border-top: 1px solid #dcdcdc;
    font-size: 10.500px;
    color: #444;
    padding-left: 7px;
}
.st-pos {
    width: 106px;
    white-space: nowrap;
}
.st-tri {
    margin-left: 0;
}
.st-obj {
    margin-left: 37px;
    width: 698px;
    white-space: nowrap;
}
.st-mon {
    width: 16px;
    height: 16px;
    flex: none;
}
.st-fill {
    width: 15px;
    height: 15px;
    margin-left: 17px;
}
.st-none {
    width: 18px;
    height: 19px;
    background-color: #fff;
    border: 1px solid #bbb;
    flex: none;
    margin-left: 3px;
}
.st-none svg {
    width: 16px;
    height: 17px;
}
.st-nonetext {
    margin-left: 5px;
    font-size: 11px;
    width: 150px;
}
.st-sep {
    width: 1px;
    height: 22px;
    background-color: #ddd;
    flex: none;
}
.st-pen {
    width: 11px;
    height: 16px;
    margin-left: 8px;
}
.st-black {
    width: 17px;
    height: 19px;
    background-color: #231f20;
    margin-left: 3px;
    flex: none;
}
.st-cmyk {
    margin-left: 6px;
    white-space: nowrap;
    font-size: 10.500px;
}

/* windows taskbar */
.taskbar {
    height: 38px;
    display: flex;
    background-color: #0c0e14;
}
.task {
    width: 46px;
    display: flex;
    align-items: center;
    justify-content: center;
    position: relative;
    flex: none;
}
.sys {
    width: 45px;
}
.first-app {
    margin-left: 2px;
}
.task svg {
    width: 16px;
    height: 16px;
}
.task svg.big {
    width: 24px;
    height: 24px;
}
.lit::after {
    content: "";
    position: absolute;
    left: 3px;
    right: 3px;
    bottom: 0;
    height: 2px;
    background-color: #86cfae;
}
.current {
    background-color: #34363c;
}
.ps {
    font-size: 11px;
    font-weight: 700;
    fill: #8fb8ee;
}
.tray {
    margin-left: auto;
    display: flex;
    align-items: center;
}
.tr {
    width: 15px;
    height: 15px;
}
.chev {
    margin-left: 18px;
}
.net {
    margin-left: 7px;
}
.mon {
    margin-left: 8px;
}
.vol {
    margin-left: 8px;
}
.clock {
    display: flex;
    flex-direction: column;
    align-items: center;
    margin-left: 7px;
    color: #e2e2e2;
    font-size: 10.500px;
    line-height: 16px;
}
.notif {
    width: 20px;
    height: 20px;
    margin: 0 19px 0 14px;
    position: relative;
}
.notif svg {
    width: 16px;
    height: 16px;
}
.badge {
    position: absolute;
    right: 1px;
    bottom: -1px;
    width: 13px;
    height: 13px;
    border-radius: 50%;
    background-color: #222;
    border: 1px solid #ddd;
    color: #eee;
    font-size: 9px;
    line-height: 11px;
    text-align: center;
}

/* pointer */
.cursor {
    position: absolute;
    left: 721px;
    top: 141px;
    width: 12px;
    height: 19px;
}
```
